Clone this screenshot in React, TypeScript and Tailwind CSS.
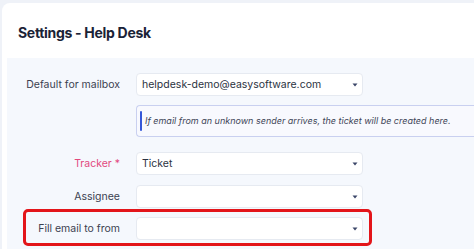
const font = { fontFamily: 'Inter, "Noto Sans", sans-serif' };

function Caret() {
  return (
    <svg width="6" height="4" viewBox="0 0 6 4" className="shrink-0">
      <path d="M0.5 0.5 L5.5 0.5 L3 3.5 Z" fill="#3b4668" />
    </svg>
  );
}

function Select({ value }: { value?: string }) {
  return (
    <div className="w-[227px] h-[23px] bg-white border border-[#e6eaf1] rounded-[4px] flex items-center justify-between pl-[5px] pr-[4px] text-[10.5px] text-[#2b3241] whitespace-nowrap">
      <span>{value ?? ''}</span>
      <Caret />
    </div>
  );
}

function Row({
  label,
  value,
  required,
  className,
}: {
  label: string;
  value?: string;
  required?: boolean;
  className?: string;
}) {
  return (
    <div className={`flex items-center gap-4 ${className ?? ''}`}>
      <div
        className={`w-[113px] text-right text-[10.5px] whitespace-nowrap ${required ? 'text-[#e2487d]' : 'text-[#3b4150]'}`}
      >
        {label}
        {required && ' *'}
      </div>
      <Select value={value} />
    </div>
  );
}

export default function App() {
  return (
    <div className="w-[474px] h-[249px] overflow-hidden bg-[#eff2f8]" style={font}>
      <div className="ml-[2px] mt-[3px] h-[260px] bg-white rounded-tl-lg">
        <div className="h-[55px] pl-4 pt-[21px]">
          <h1 className="text-[14px] leading-[18px] font-bold tracking-[-0.3px] text-[#1a2236]">
            Settings - Help Desk
          </h1>
        </div>
        <div className="ml-[5px] h-[220px] bg-[#f5f8fd] pt-[15px]">
          <Row label="Default for mailbox" value="helpdesk-demo@easysoftware.com" />
          <div className="flex mt-[9px]">
            <div className="w-[129px] shrink-0" />
            <div className="flex-1 h-[32px] border border-[#c9d0f0] border-r-0 rounded-l-[4px] bg-[#f8f9fe] flex items-center pl-[3px]">
              <div className="w-[2px] h-[20px] bg-[#3557d8] rounded-sm" />
              <span className="ml-[3px] text-[9px] italic text-[#3f4658] whitespace-nowrap">
                If email from an unknown sender arrives, the ticket will be created here.
              </span>
            </div>
          </div>
          <Row label="Tracker" value="Ticket" required className="mt-[15px]" />
          <Row label="Assignee" className="mt-[10px]" />
          <div className="relative mt-[9px]">
            <Row label="Fill email to from" />
            <div className="absolute left-[16px] top-[-8px] w-[349px] h-[37px] border-[3px] border-[#e3151a] rounded-[5px] pointer-events-none" />
          </div>
        </div>
      </div>
    </div>
  );
}
